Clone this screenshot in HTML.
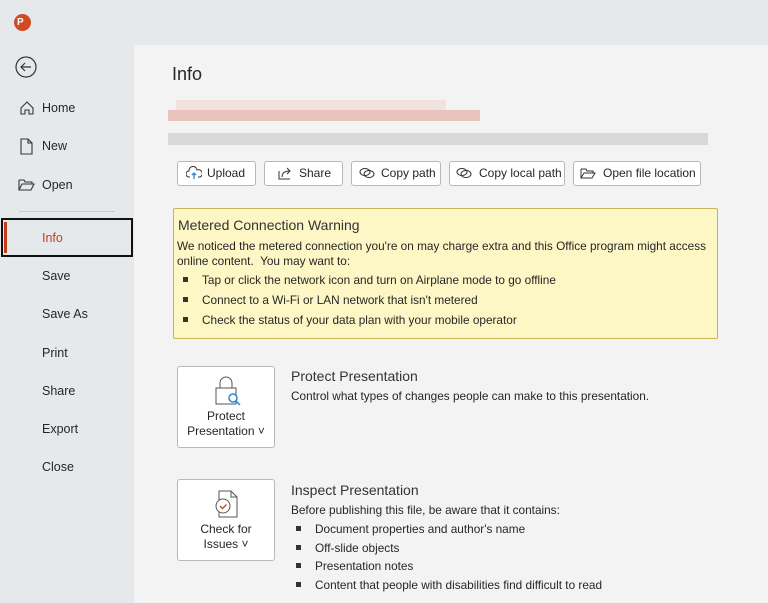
<!DOCTYPE html><html><head><style>
*{margin:0;padding:0;box-sizing:border-box}
body{width:768px;height:603px;overflow:hidden;background:#e6e9eb;font-family:"Liberation Sans",sans-serif;color:#262626;position:relative;font-size:12px}
.abs{position:absolute}
.main{left:134px;top:45px;width:634px;height:558px;background:#f3f3f3}
.nav{left:0;font-size:12.5px;color:#262626}
.btn{position:absolute;top:161px;height:25px;border:1px solid #b8b8b8;border-radius:3px;background:#fff;font-size:12px;line-height:23px;padding-left:29px}
.warn{left:173px;top:208px;width:545px;height:131px;background:#fcf7c5;border:1px solid #c8b45a;border-radius:2px}
.big{position:absolute;left:177px;width:98px;height:82px;background:#fff;border:1px solid #b8b8b8;border-radius:3px;text-align:center;font-size:12px;line-height:15px}
.sq{display:inline-block;width:5px;height:5px;background:#333;margin:0 14px 2px 9px}
</style></head><body>
<div class="abs" style="left:14px;top:14px;width:17px;height:17px;border-radius:50%;background:#d04a25;color:#fff;font-size:10px;font-weight:bold;line-height:17px;padding-left:3px">P</div>
<svg class="abs" style="left:15px;top:56px" width="22" height="22"><circle cx="11" cy="11" r="10" fill="none" stroke="#333" stroke-width="1.2"/><path d="M16 11H6M10 7l-4 4 4 4" fill="none" stroke="#333" stroke-width="1.2"/></svg>
<svg class="abs" style="left:19px;top:100px" width="16" height="16"><path d="M2 8l6-6 6 6v6h-4v-4H6v4H2z" fill="none" stroke="#333" stroke-width="1.1"/></svg>
<div class="abs nav" style="left:42px;top:101px">Home</div>
<svg class="abs" style="left:20px;top:138px" width="14" height="17"><path d="M1 1h7l4 4v11H1z M8 1v4h4" fill="none" stroke="#333" stroke-width="1.1"/></svg>
<div class="abs nav" style="left:42px;top:139px">New</div>
<svg class="abs" style="left:18px;top:178px" width="17" height="14"><path d="M1 2h5l1 2h7v2 M1 2v10h12l3-6H4L1 12" fill="none" stroke="#333" stroke-width="1.1"/></svg>
<div class="abs nav" style="left:42px;top:178px">Open</div>
<div class="abs" style="left:19px;top:211px;width:96px;height:1px;background:#ccc"></div>
<div class="abs" style="left:1px;top:218px;width:132px;height:39px;border:2px solid #111"></div>
<div class="abs" style="left:4px;top:222px;width:3px;height:31px;background:#c43e1c"></div>
<div class="abs nav" style="left:42px;top:231px;color:#c43e1c">Info</div>
<div class="abs nav" style="left:42px;top:269px">Save</div>
<div class="abs nav" style="left:42px;top:307px">Save As</div>
<div class="abs nav" style="left:42px;top:346px">Print</div>
<div class="abs nav" style="left:42px;top:384px">Share</div>
<div class="abs nav" style="left:42px;top:422px">Export</div>
<div class="abs nav" style="left:42px;top:460px">Close</div>
<div class="abs main"></div>
<div class="abs" style="left:172px;top:64px;font-size:18px">Info</div>
<div class="abs" style="left:168px;top:110px;width:312px;height:11px;background:#e8c4bc"></div>
<div class="abs" style="left:176px;top:100px;width:270px;height:10px;background:#f2e2de"></div>
<div class="abs" style="left:168px;top:133px;width:540px;height:12px;background:#d8d8d8"></div>
<div class="btn" style="left:177px;width:79px">Upload</div>
<div class="btn" style="left:264px;width:79px;padding-left:34px">Share</div>
<div class="btn" style="left:351px;width:90px">Copy path</div>
<div class="btn" style="left:449px;width:116px">Copy local path</div>
<div class="btn" style="left:573px;width:128px">Open file location</div>
<svg class="abs" style="left:186px;top:166px" width="16" height="14"><path d="M4 11H3a3 3 0 010-6 4 4 0 018-1 3 3 0 013 7h-2" fill="none" stroke="#333"/><path d="M8 13V7M6 9l2-2 2 2" fill="none" stroke="#2b88d8" stroke-width="1.3"/></svg>
<svg class="abs" style="left:277px;top:166px" width="16" height="14"><path d="M2 5v8h11M5 11c0-4 3-6 8-6M10 2l3 3-3 3" fill="none" stroke="#333"/></svg>
<svg class="abs" style="left:359px;top:167px" width="16" height="12"><ellipse cx="6" cy="5" rx="5" ry="3.5" fill="none" stroke="#333"/><ellipse cx="10" cy="7" rx="5" ry="3.5" fill="none" stroke="#333"/></svg>
<svg class="abs" style="left:456px;top:167px" width="16" height="12"><ellipse cx="6" cy="5" rx="5" ry="3.5" fill="none" stroke="#333"/><ellipse cx="10" cy="7" rx="5" ry="3.5" fill="none" stroke="#333"/></svg>
<svg class="abs" style="left:580px;top:167px" width="16" height="13"><path d="M1 2h5l1 2h6v2 M1 2v9h11l3-5H4L1 11" fill="none" stroke="#333"/></svg>
<div class="abs warn">
<div style="position:absolute;left:4px;top:8px;font-size:14px;color:#333">Metered Connection Warning</div>
<div style="position:absolute;left:3px;top:30px;font-size:11.8px;line-height:14.5px;width:540px">We noticed the metered connection you're on may charge extra and this Office program might access online content.&nbsp; You may want to:</div>
<div style="position:absolute;left:0;top:61px;font-size:11.8px;line-height:20px">
<div><span class="sq"></span>Tap or click the network icon and turn on Airplane mode to go offline</div>
<div><span class="sq"></span>Connect to a Wi-Fi or LAN network that isn't metered</div>
<div><span class="sq"></span>Check the status of your data plan with your mobile operator</div></div></div>
<div class="big" style="top:366px"><svg style="margin-top:9px" width="30" height="32"><path d="M9 12V7a6 6 0 0112 0v5" fill="none" stroke="#555"/><rect x="5" y="12" width="20" height="16" fill="none" stroke="#555"/><circle cx="22" cy="22" r="4" fill="#fff" stroke="#2b88d8" stroke-width="1.5"/><path d="M25 25l4 4" stroke="#2b88d8" stroke-width="1.5"/></svg><div style="margin-top:-3px">Protect<br>Presentation ˅</div></div>
<div class="abs" style="left:291px;top:368px;font-size:14px;color:#333">Protect Presentation</div>
<div class="abs" style="left:291px;top:389px;font-size:11.8px">Control what types of changes people can make to this presentation.</div>
<div class="big" style="top:479px"><svg style="margin-top:9px" width="30" height="32"><path d="M8 2h12l6 6v20H8z M20 2v6h6" fill="none" stroke="#555"/><circle cx="12" cy="17" r="7" fill="#fff" stroke="#555"/><path d="M9 17l2.5 2.5 4-4" fill="none" stroke="#d04a25" stroke-width="1.4"/></svg><div style="margin-top:-3px">Check for<br>Issues ˅</div></div>
<div class="abs" style="left:291px;top:482px;font-size:14px;color:#333">Inspect Presentation</div>
<div class="abs" style="left:291px;top:503px;font-size:11.8px">Before publishing this file, be aware that it contains:</div>
<div class="abs" style="left:287px;top:520px;font-size:11.8px;line-height:18.5px">
<div><span class="sq"></span>Document properties and author's name</div>
<div><span class="sq"></span>Off-slide objects</div>
<div><span class="sq"></span>Presentation notes</div>
<div><span class="sq"></span>Content that people with disabilities find difficult to read</div></div>
</body></html>
